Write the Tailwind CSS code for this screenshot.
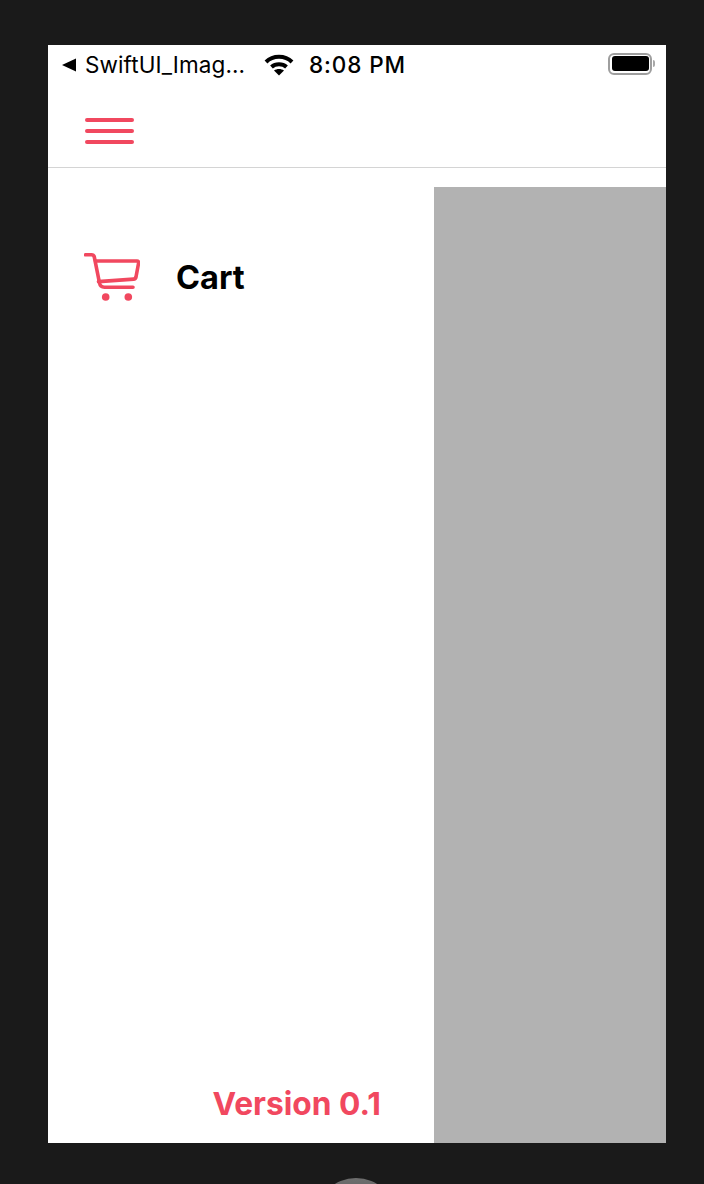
<!DOCTYPE html>
<html lang="en">
<head>
  <meta charset="UTF-8" />
  <meta name="viewport" content="width=device-width, initial-scale=1.0" />
  <title>SwiftUI Image Slider</title>
  <script src="https://cdn.jsdelivr.net/npm/@tailwindcss/browser@4"></script>
</head>
<body class="bg-[#1a1a1a] h-[1184px] overflow-hidden font-['Inter',sans-serif]">
  <div class="relative h-[1184px] overflow-hidden pt-[45px] pl-[48px]">
    <!-- Phone screen -->
    <div class="w-[618px] h-[1098px] bg-white flex flex-col">
      <!-- Status bar -->
      <div class="h-[40px] flex items-center shrink-0 text-black">
        <svg class="ml-[14px] w-[14px] h-[14px]" viewBox="0 0 14 14"><path d="M0 7 L14 0.5 V13.5 Z" fill="#000"/></svg>
        <span class="ml-[9px] w-[179px] text-[22.5px] leading-none tracking-[0.1px]">SwiftUI_Imag...</span>
        <svg class="w-[30px] h-[22px]" viewBox="0 0 30 22" fill="none" stroke="#000" stroke-width="4">
          <path d="M2 8 C9 1 21 1 28 8"/>
          <path d="M7.5 13 C11.5 9.3 18.5 9.3 22.5 13"/>
          <path d="M15 21.5 L10 16.6 C13 14.6 17 14.6 20 16.6 Z" fill="#000" stroke="none"/>
        </svg>
        <span class="ml-[15px] text-[22.5px] leading-none font-medium tracking-[0.9px]">8:08 PM</span>
        <div class="ml-auto mr-[11px] mb-[3px] flex items-center">
          <div class="w-[44px] h-[22px] rounded-[6px] border-[2.5px] border-[#9e9e9e] p-[1.5px]">
            <div class="w-full h-full rounded-[3px] bg-black"></div>
          </div>
          <div class="ml-[1px] w-[2px] h-[7px] rounded-r-sm bg-[#a8a8a8]"></div>
        </div>
      </div>
      <!-- Nav bar -->
      <div class="h-[83px] shrink-0 border-b border-[#d4d4d4] pl-[37px] pt-[33px]">
        <div class="w-[49px] flex flex-col gap-[7px]">
          <div class="h-[4px] rounded-full bg-[#f1485f]"></div>
          <div class="h-[4px] rounded-full bg-[#f1485f]"></div>
          <div class="h-[4px] rounded-full bg-[#f1485f]"></div>
        </div>
      </div>
      <!-- Menu + overlay -->
      <div class="flex-1 flex min-h-0">
        <div class="w-[386px] shrink-0 flex flex-col">
          <div class="flex items-center pl-[36px] pt-[85px]">
            <svg class="w-[56px] h-[48px]" viewBox="0 0 56 48" fill="none" stroke="#f1485f" stroke-width="3.6" stroke-linecap="round" stroke-linejoin="round">
              <path d="M1.5 1.8 H7.5 C9 1.8 10 2.6 10.3 4 L15.5 30 C16 32.8 17.6 34.2 20.5 34.2 H49"/>
              <path d="M11.5 8 H53 C54.2 8 54.8 8.8 54.6 10 L52 24 C51.7 25.3 51 26 49.6 26.1 L14.5 28.6"/>
              <circle cx="21.7" cy="44" r="3.8" fill="#f1485f" stroke="none"/>
              <circle cx="44.3" cy="44" r="3.8" fill="#f1485f" stroke="none"/>
            </svg>
            <span class="ml-[36px] pt-[2px] text-[32.5px] leading-none font-bold text-black">Cart</span>
          </div>
          <div class="mt-auto pb-[23px] pl-[164.5px] text-[31.7px] leading-none font-bold text-[#f1485f] whitespace-nowrap">Version 0.1</div>
        </div>
        <div class="flex-1 mt-[19px] bg-[#b2b2b2]"></div>
      </div>
    </div>
    <!-- Home button, cut off by the window edge -->
    <div class="absolute left-[316px] top-[1178px] w-[80px] h-[80px] rounded-full bg-gradient-to-b from-[#6e6e6e] to-[#3a3a3a]"></div>
  </div>
</body>
</html>
